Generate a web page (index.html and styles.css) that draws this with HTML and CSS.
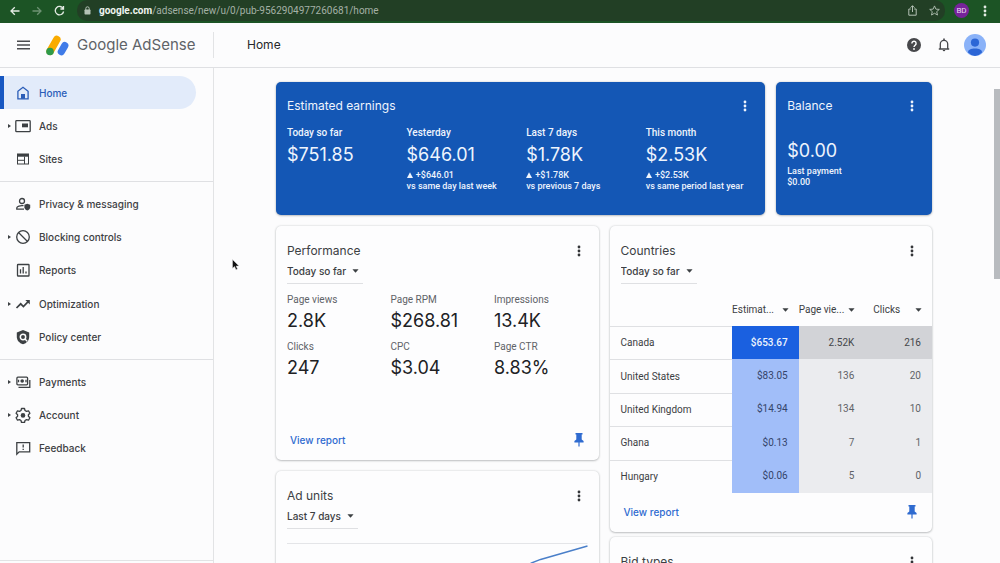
FILE: index.html
```html
<!DOCTYPE html>
<html lang="en">
<head>
<meta charset="utf-8">
<meta name="viewport" content="width=device-width, initial-scale=1">
<title>Google AdSense - Home</title>
<link rel="stylesheet" href="styles.css">
</head>
<body>
<svg class="sprite" aria-hidden="true">
  <symbol id="dots" viewBox="0 0 4 12"><circle cx="2" cy="2" r="1.4"/><circle cx="2" cy="6" r="1.4"/><circle cx="2" cy="10" r="1.4"/></symbol>
  <symbol id="caret" viewBox="0 0 8 4"><path d="M0.5 0h7L4 4z"/></symbol>
  <symbol id="up" viewBox="0 0 6 6"><path d="M3 0.3L6 6H0z"/></symbol>
  <symbol id="pin" viewBox="0 0 10 14"><path d="M1.5 0h7v1.4h-.8v5L9.600 8v1.500H5.600V13.600h-1.200V9.500H.4V8l1.900-1.600v-5h-.8z"/></symbol>
</svg>

<div class="browser">
  <div class="browser-nav">
    <button class="tool" aria-label="Back"><svg width="10" height="10" viewBox="0 0 10 10" class="line"><path d="M9.500 5H1M4.800 1.200L1 5l3.800 3.800"/></svg></button>
    <button class="tool faded" aria-label="Forward"><svg width="10" height="10" viewBox="0 0 10 10" class="line"><path d="M.5 5H9M5.200 1.200L9 5 5.200 8.800"/></svg></button>
    <button class="tool" aria-label="Reload"><svg width="11" height="11" viewBox="0 0 11 11" class="line"><path d="M9.200 3.700A4.200 4.200 0 1 0 9.600 6.500M9.500 1v3H6.400"/></svg></button>
  </div>
  <div class="address">
    <svg width="7" height="9" viewBox="0 0 7 9" class="lock"><rect x=".5" y="3.500" width="6" height="5" rx=".7"/><path d="M1.800 4V2.500a1.700 1.700 0 0 1 3.400 0V4" fill="none" stroke="currentColor"/></svg>
    <span class="url"><span class="host">google.com</span>/adsense/new/u/0/pub-9562904977260681/home</span>
    <button class="tool" aria-label="Share"><svg width="9" height="11" viewBox="0 0 9 11" class="line thin"><path d="M2.800 4H.8v6.200h7.400V4h-2M4.500 7V.8M2.500 2.700l2-2 2 2"/></svg></button>
    <button class="tool" aria-label="Bookmark"><svg width="11" height="11" viewBox="0 0 24 24" class="line star"><path d="M12 2l3 7 7.500.6-5.700 4.900 1.800 7.400L12 18l-6.600 3.900 1.800-7.400L1.500 9.600 9 9z"/></svg></button>
  </div>
  <button class="profile" aria-label="Browser profile">BD</button>
  <button class="tool" aria-label="Browser menu"><svg width="4" height="12" class="solid"><use href="#dots"/></svg></button>
</div>

<header class="header">
  <div class="brand">
    <button class="tool" aria-label="Menu"><svg width="13" height="10" viewBox="0 0 13 10" class="line menu"><path d="M0 1.200h13M0 5h13M0 8.800h13"/></svg></button>
    <svg class="logo" width="23" height="21" viewBox="0 0 23 21" aria-hidden="true"><path d="M4.200 16.200L10.800 4.500" stroke="#f9ab00" stroke-width="7.600" stroke-linecap="round"/><circle cx="4" cy="16.500" r="3.800" fill="#2e9a49"/><path d="M15.300 16.700L18.800 10.600" stroke="#3f7be8" stroke-width="7.200" stroke-linecap="round"/></svg>
    <span class="wordmark">Google AdSense</span>
  </div>
  <h1 class="page-title">Home</h1>
  <div class="actions">
    <button class="tool" aria-label="Help"><svg width="14" height="14" viewBox="0 0 14 14"><circle cx="7" cy="7" r="7" fill="#47484b"/><path d="M4.900 5.400a2.100 2.100 0 1 1 3.500 1.500C7.500 7.700 7 8 7 9" fill="none" stroke="#fff" stroke-width="1.400"/><circle cx="7" cy="11" r=".9" fill="#fff"/></svg></button>
    <button class="tool" aria-label="Notifications"><svg width="12" height="14" viewBox="0 0 12 14"><path d="M.8 11h10.400M2.300 11V6a3.700 3.700 0 0 1 7.400 0v5" fill="none" stroke="#47484b" stroke-width="1.300"/><path d="M5.200 2.200V.4h1.600v1.800zM4.700 12h2.600a1.300 1.300 0 0 1-2.600 0z" fill="#47484b"/></svg></button>
    <button class="tool" aria-label="Account"><svg width="22" height="22" viewBox="0 0 22 22"><circle cx="11" cy="11" r="11" fill="#8ab2f8"/><circle cx="11" cy="8.600" r="4.100" fill="#2c66d6"/><path d="M4 18.500C4 15.700 7 14.600 11 14.600s7 1.100 7 3.900A10.500 10.500 0 0 1 11 22a10.500 10.500 0 0 1-7-3.500z" fill="#2c66d6"/></svg></button>
  </div>
</header>

<div class="layout">
  <nav class="sidebar" aria-label="Main">
    <ul class="group short">
      <li><a class="item active" href="#"><svg width="16" height="16" viewBox="0 0 16 16" class="line"><path d="M2.900 6.200L8 2.300l5.100 3.900v7.600H2.900z"/><path d="M6 13.800V9h4v4.800z" fill="currentColor" stroke="none"/></svg>Home</a></li>
      <li><a class="item more" href="#"><svg width="16" height="16" viewBox="0 0 16 16" class="line"><rect x=".8" y="2.700" width="14.400" height="11" rx=".8"/><path d="M7 5.500h6v3.800H7z" fill="currentColor" stroke="none"/></svg>Ads</a></li>
      <li><a class="item" href="#"><svg width="16" height="16" viewBox="0 0 16 16" class="line thin"><rect x="2.500" y="3.200" width="11" height="9.800"/><path d="M2 2.700h12v3H2z" fill="currentColor" stroke="none"/><path d="M2.500 9.300h7M9.500 5.500V13"/></svg>Sites</a></li>
    </ul>
    <ul class="group tall">
      <li><a class="item" href="#"><svg width="16" height="16" viewBox="0 0 16 16" class="line"><circle cx="7" cy="5" r="2.500"/><path d="M9 13.200H1.800v-1.400C2 10.300 5 9.300 8.500 9.700"/><path d="M12.300 7.700l2.900 1.100v2.400c0 1.500-1.200 2.700-2.900 3.200-1.700-.5-2.900-1.700-2.900-3.200V8.800z" fill="currentColor" stroke="none"/></svg>Privacy &amp; messaging</a></li>
      <li><a class="item more" href="#"><svg width="16" height="16" viewBox="0 0 16 16" class="line"><circle cx="8" cy="8" r="6.300"/><path d="M3.500 3.500l9 9"/></svg>Blocking controls</a></li>
      <li><a class="item" href="#"><svg width="16" height="16" viewBox="0 0 16 16" class="line"><rect x="2.500" y="2.500" width="11.500" height="11.500" rx=".6"/><path d="M5.500 7.200v4.300M8.200 5v6.500M11 9.500v2"/></svg>Reports</a></li>
      <li><a class="item more" href="#"><svg width="16" height="16" viewBox="0 0 16 16" class="line bold"><path d="M1.500 12l4.200-4.200 2.700 2.700 5-5.200"/><path d="M10.300 4h4.500v4.500z" fill="currentColor" stroke="none"/></svg>Optimization</a></li>
      <li><a class="item" href="#"><svg width="16" height="16" viewBox="0 0 16 16"><path d="M8 .9l6.200 2.700v4.100c0 3.500-2.500 6.500-6.200 7.500C4.300 14.200 1.800 11.200 1.800 7.700V3.600z" fill="currentColor"/><circle cx="8" cy="8" r="2.700" fill="none" stroke="#fcfcfd" stroke-width="1.500"/><path d="M10 10l2.200 2.200" stroke="#fcfcfd" stroke-width="1.400"/></svg>Policy center</a></li>
    </ul>
    <ul class="group short">
      <li><a class="item more" href="#"><svg width="16" height="16" viewBox="0 0 16 16" class="line"><rect x="1.900" y="3.200" width="10.700" height="7.600" rx="1"/><path d="M3.500 13.300h11.300V6"/><circle cx="7.200" cy="7" r="1.800" fill="currentColor" stroke="none"/><path d="M3.500 5.700v2.600M11 5.700v2.600"/></svg>Payments</a></li>
      <li><a class="item more" href="#"><svg width="16" height="16" viewBox="0 0 16 16" class="line"><path d="M6.500 1.500h3l.5 2 1.500.9 2-.6 1.400 2.500-1.500 1.500v1.400l1.500 1.500-1.400 2.500-2-.6-1.500.9-.5 2h-3l-.5-2-1.500-.9-2 .6-1.400-2.500 1.500-1.500V7.800L1.100 6.300l1.400-2.500 2 .6L6 3.500z" stroke-linejoin="round"/><circle cx="8" cy="8.400" r="2.300" fill="currentColor" stroke="none"/></svg>Account</a></li>
      <li><a class="item" href="#"><svg width="16" height="16" viewBox="0 0 16 16" class="line"><path d="M1.800 14.200V2.600h12.900v9.200H4.200z"/><path d="M8.200 4.500v3M8.200 8.700v1.300"/></svg>Feedback</a></li>
    </ul>
    <div class="sidebar-foot"></div>
  </nav>

  <main class="content">
    <div class="board">
      <section class="card blue earnings">
        <div class="card-head"><h2>Estimated earnings</h2><button class="tool" aria-label="Estimated earnings options"><svg width="4" height="12" class="solid"><use href="#dots"/></svg></button></div>
        <div class="periods">
          <div class="period"><span class="label">Today so far</span><span class="value">$751.85</span></div>
          <div class="period"><span class="label">Yesterday</span><span class="value">$646.01</span><span class="note"><svg width="6" height="6" class="solid"><use href="#up"/></svg> +$646.01<br>vs same day last week</span></div>
          <div class="period"><span class="label">Last 7 days</span><span class="value">$1.78K</span><span class="note"><svg width="6" height="6" class="solid"><use href="#up"/></svg> +$1.78K<br>vs previous 7 days</span></div>
          <div class="period"><span class="label">This month</span><span class="value">$2.53K</span><span class="note"><svg width="6" height="6" class="solid"><use href="#up"/></svg> +$2.53K<br>vs same period last year</span></div>
        </div>
      </section>
      <section class="card blue balance">
        <div class="card-head"><h2>Balance</h2><button class="tool" aria-label="Balance options"><svg width="4" height="12" class="solid"><use href="#dots"/></svg></button></div>
        <div class="period payout"><span class="value">$0.00</span><span class="note">Last payment<br>$0.00</span></div>
      </section>

      <div class="column">
        <section class="card performance">
          <div class="card-head"><h2>Performance</h2><button class="tool" aria-label="Performance options"><svg width="4" height="12" class="solid"><use href="#dots"/></svg></button></div>
          <div class="range"><select aria-label="Performance date range"><option>Today so far</option></select><svg width="7" height="4" class="solid"><use href="#caret"/></svg></div>
          <div class="metrics">
            <div class="metric"><span class="label">Page views</span><span class="value">2.8K</span></div>
            <div class="metric"><span class="label">Page RPM</span><span class="value">$268.81</span></div>
            <div class="metric"><span class="label">Impressions</span><span class="value">13.4K</span></div>
            <div class="metric"><span class="label">Clicks</span><span class="value">247</span></div>
            <div class="metric"><span class="label">CPC</span><span class="value">$3.04</span></div>
            <div class="metric"><span class="label">Page CTR</span><span class="value">8.83%</span></div>
          </div>
          <div class="card-foot"><a href="#">View report</a><button class="tool" aria-label="Pin performance"><svg width="10" height="14" class="solid"><use href="#pin"/></svg></button></div>
        </section>
        <section class="card">
          <div class="card-head"><h2>Ad units</h2><button class="tool" aria-label="Ad units options"><svg width="4" height="12" class="solid"><use href="#dots"/></svg></button></div>
          <div class="range"><select aria-label="Ad units date range"><option>Last 7 days</option></select><svg width="7" height="4" class="solid"><use href="#caret"/></svg></div>
          <svg class="chart" viewBox="0 0 301 100" role="img" aria-label="Ad unit earnings, last 7 days"><path d="M0 .5h301" stroke="#e4e5e8"/><path d="M200 44L245 20l9-3.500L301 3" fill="none" stroke="#4a7fc9" stroke-width="1.400"/></svg>
        </section>
      </div>

      <div class="column tight">
        <section class="card countries">
          <div class="card-head"><h2>Countries</h2><button class="tool" aria-label="Countries options"><svg width="4" height="12" class="solid"><use href="#dots"/></svg></button></div>
          <div class="range"><select aria-label="Countries date range"><option>Today so far</option></select><svg width="7" height="4" class="solid"><use href="#caret"/></svg></div>
          <table class="table">
            <thead><tr><td></td>
              <th scope="col"><button class="sort">Estimat...<svg width="7" height="4" class="solid"><use href="#caret"/></svg></button></th>
              <th scope="col"><button class="sort">Page vie...<svg width="7" height="4" class="solid"><use href="#caret"/></svg></button></th>
              <th scope="col"><button class="sort clicks">Clicks<svg width="7" height="4" class="solid"><use href="#caret"/></svg></button></th></tr></thead>
            <tbody>
              <tr class="top"><th scope="row">Canada</th><td>$653.67</td><td>2.52K</td><td>216</td></tr>
              <tr><th scope="row">United States</th><td>$83.05</td><td>136</td><td>20</td></tr>
              <tr><th scope="row">United Kingdom</th><td>$14.94</td><td>134</td><td>10</td></tr>
              <tr><th scope="row">Ghana</th><td>$0.13</td><td>7</td><td>1</td></tr>
              <tr><th scope="row">Hungary</th><td>$0.06</td><td>5</td><td>0</td></tr>
            </tbody>
          </table>
          <div class="card-foot"><a href="#">View report</a><button class="tool" aria-label="Pin countries"><svg width="10" height="14" class="solid"><use href="#pin"/></svg></button></div>
        </section>
        <section class="card">
          <div class="card-head"><h2>Bid types</h2><button class="tool" aria-label="Bid types options"><svg width="4" height="12" class="solid"><use href="#dots"/></svg></button></div>
        </section>
      </div>
    </div>
    <svg class="cursor" width="8" height="12" viewBox="0 0 8 12" aria-hidden="true"><path d="M.5.5v8.800l2-1.800 1.500 3.300 1.500-.7L4.100 7h2.900z" fill="#111" stroke="#ddd" stroke-width=".5"/></svg>
  </main>
  <div class="scrollbar"><div class="thumb"></div></div>
</div>
</body>
</html>
```

FILE: styles.css
```css
* { box-sizing: border-box; }

body {
  margin: 0;
  height: 100vh;
  display: flex;
  flex-direction: column;
  overflow: hidden;
  background: #fcfcfd;
  color: #3c4043;
  font: 10px/12px Roboto, sans-serif;
}

h1, h2 { margin: 0; font-family: Inter, sans-serif; font-weight: 400; }
ul { margin: 0; padding: 0; list-style: none; }
a { color: inherit; text-decoration: none; }
button, select { font: inherit; color: inherit; background: none; border: 0; padding: 0; margin: 0; }
svg { flex: none; }

.sprite { position: absolute; width: 0; height: 0; }
.tool { display: flex; align-items: center; justify-content: center; }
.line { fill: none; stroke: currentColor; stroke-width: 1.3; }
.thin { stroke-width: 1; }
.bold { stroke-width: 1.7; }
.star { stroke-width: 2; }
.menu { stroke-width: 1.6; }
.solid { fill: currentColor; }

/* Browser toolbar */
.browser {
  flex: none;
  height: 23px;
  display: flex;
  align-items: center;
  padding: 0 13px 2px 10px;
  background: #1c5425;
  color: #e3ebe4;
}
.browser-nav { display: flex; gap: 12px; width: 67px; }
.faded { color: #6d9273; }
.address {
  flex: 1;
  height: 21px;
  display: flex;
  align-items: center;
  gap: 12px;
  padding: 0 5px 0 7px;
  border-radius: 10px;
  background: #223f25;
  color: #b4c1b5;
}
.lock { fill: currentColor; }
.url { flex: 1; margin-left: -4px; color: #a4b1a5; }
.host { color: #f0f4f0; font-weight: 700; }
.profile {
  width: 15px;
  height: 15px;
  margin: 0 14px 0 9px;
  border-radius: 50%;
  background: #76239a;
  color: #eadcf0;
  font-size: 8px;
}

/* Application header */
.header {
  flex: none;
  height: 45px;
  display: flex;
  align-items: center;
  padding-right: 14px;
  border-bottom: 1px solid #dfe0e3;
}
.brand {
  width: 214px;
  height: 26px;
  display: flex;
  align-items: center;
  padding-left: 17px;
  border-right: 1px solid #e2e3e5;
  color: #4a4b4f;
}
.logo { margin: 0 8px 0 16px; }
.wordmark { font: 15px/20px Inter, sans-serif; color: #5f6368; }
.page-title { flex: 1; padding-left: 33px; font-size: 12px; line-height: 16px; color: #26272a; }
.actions { display: flex; align-items: center; gap: 17px; }
.actions .tool:last-child { margin-left: -3px; }

.layout { flex: 1; min-height: 0; display: flex; }

/* Sidebar */
.sidebar {
  flex: none;
  width: 214px;
  display: flex;
  flex-direction: column;
  padding-top: 2px;
  border-right: 1px solid #e2e3e5;
}
.group { display: grid; grid-auto-rows: 1fr; padding: 5px 0; border-bottom: 1px solid #dfe0e3; }
.group:first-child { padding-top: 6px; }
.short { min-height: 112px; }
.tall { min-height: 178px; }
.group:nth-child(3) { min-height: 110px; border-bottom: 0; }
.item {
  position: relative;
  height: 100%;
  display: flex;
  align-items: center;
  gap: 8px;
  margin-right: 17px;
  padding-left: 15px;
  font: 500 10px/12px Inter, sans-serif;
}
.active {
  padding-left: 11px;
  border-left: 4px solid #1757c2;
  border-radius: 0 17px 17px 0;
  background: #e2ebfa;
  color: #2b5db8;
}
.more::before {
  content: "";
  position: absolute;
  left: 8px;
  border: 2px solid transparent;
  border-left: 3px solid #3c4043;
  border-right: 0;
}
.sidebar-foot { margin-top: auto; height: 3px; border-top: 1px solid #e2e3e5; }

/* Dashboard */
.content { position: relative; flex: 1; min-width: 0; overflow: hidden; padding: 14px 20px 0; }
.board {
  max-width: 656px;
  margin: 0 auto;
  display: grid;
  grid-template-columns: repeat(4, 1fr);
  align-items: start;
  gap: 11px;
}
.card {
  border-radius: 5px;
  padding: 16px 11px 0;
  background: #fdfdfe;
  box-shadow: 0 0 2px rgba(60, 64, 67, .25), 0 1px 2px rgba(60, 64, 67, .25);
}
.blue { min-height: 133px; padding-top: 15px; background: #1457b5; color: #eef4fd; }
.earnings { grid-column: span 3; }
.column { grid-column: span 2; display: flex; flex-direction: column; gap: 11px; }
.tight { gap: 5px; }

.card-head { display: flex; justify-content: space-between; align-items: center; }
.card-head h2 { font-size: 12px; line-height: 18px; }
.card-head .tool { width: 18px; height: 18px; color: #333538; }
.blue .card-head .tool { color: inherit; }

.label { font-size: 10px; line-height: 12px; }
.value { font: 18px/24px Inter, sans-serif; }
.note { font-size: 9px; line-height: 11px; font-weight: 500; }

.periods { display: grid; grid-template-columns: repeat(4, 1fr); padding-top: 12px; margin-right: -11px; }
.period { display: flex; flex-direction: column; white-space: nowrap; }
.period .label { font-weight: 500; }
.period .value { line-height: 31px; }
.periods .solid { margin-right: 1px; }
.payout { padding-top: 20px; }

.range {
  display: inline-flex;
  align-items: center;
  gap: 5px;
  height: 24px;
  padding: 0 4px 2px 0;
  border-bottom: 1px solid #dfe0e3;
  font: 500 10px/12px Inter, sans-serif;
}
.range select { appearance: none; }

.metrics { display: grid; grid-template-columns: repeat(3, 1fr); row-gap: 5px; padding-top: 9px; margin-right: -10px; }
.metric { display: flex; flex-direction: column; }
.metric .label { color: #5f6368; line-height: 14px; }
.metric .value { line-height: 28px; color: #202124; }

.card-foot {
  display: flex;
  justify-content: space-between;
  align-items: center;
  height: 39px;
  padding: 0 4px 2px 3px;
  color: #2f6bd0;
  font: 500 10px/12px Inter, sans-serif;
}
.performance { display: flex; flex-direction: column; align-items: stretch; min-height: 234px; }
.performance .range { align-self: flex-start; }
.performance .card-foot { margin-top: auto; }

.chart { display: block; width: 100%; margin-top: 14px; }

/* Countries table */
.countries { padding-left: 0; padding-right: 0; }
.countries .card-head { padding: 0 11px; }
.countries .range { margin-left: 11px; }
.countries .card-foot { padding: 0 15px 2px 14px; }
.table {
  width: 100%;
  height: 200px;
  margin-top: 9px;
  table-layout: fixed;
  border-collapse: separate;
  border-spacing: 0;
}
.table thead tr { height: 33px; }
.table th, .table td { padding: 0 11px; font-weight: 400; text-align: right; }
.table tr > :first-child { width: 38%; text-align: left; }
.table thead th { padding: 0 10px 0 0; }
.sort { width: 100%; display: flex; align-items: center; justify-content: space-between; white-space: nowrap; }
.clicks { padding-left: 8px; }
.table tbody th { border-top: 1px solid #dfe0e3; }
.table tbody td { background: #ebecef; color: #5f6368; }
.table tbody td:nth-child(2) { background: #a1bef9; color: #34446a; }
.table .top td { background: #d2d3d7; color: #44464a; }
.table tbody .top td:nth-child(2) { background: #1a60e0; color: #eef4fd; font-weight: 500; }

.cursor { position: absolute; left: 18px; top: 191px; }

.scrollbar { flex: none; width: 6px; padding-top: 21px; }
.thumb { height: 40%; background: #b8bbbf; }
```
